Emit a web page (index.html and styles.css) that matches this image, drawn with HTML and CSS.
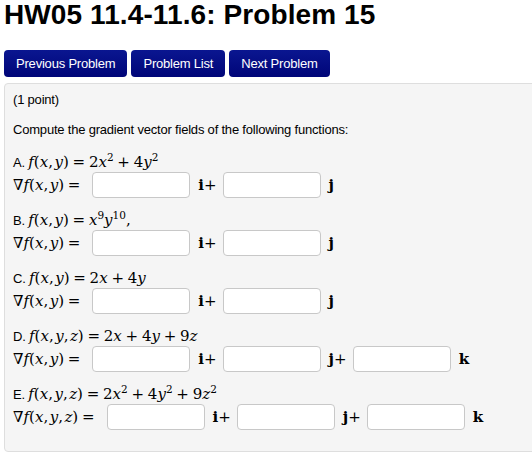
FILE: index.html
```html
<!DOCTYPE html>
<html>
<head>
	<title>HW05 11.4-11.6: Problem 15</title>
	<meta charset="utf-8">
	<link rel="stylesheet" href="styles.css">
</head>
<body>
	<div id="page">
		<h1 class="title">HW05 11.4-11.6: Problem 15</h1>

		<div class="nav">
			<a class="btn" href="#">Previous Problem</a>
			<a class="btn" href="#">Problem List</a>
			<a class="btn" href="#">Next Problem</a>
		</div>

		<div class="problem">
			<p class="points">(1 point)</p>
			<p class="intro">Compute the gradient vector fields of the following functions:</p>

			<!-- A -->
			<div class="part">
				<div class="def">A. <span class="m"><i>f</i>(<i>x</i>,&#8202;<i>y</i>) = 2<i>x</i><sup>2</sup> + 4<i>y</i><sup>2</sup></span></div>
				<div class="row">
					<span class="m lhs">∇<i>f</i>(<i>x</i>,&#8202;<i>y</i>) =</span>
					<input type="text" class="ans">
					<span class="m unit"><b>i</b>+</span>
					<input type="text" class="ans">
					<span class="m unit"><b>j</b></span>
				</div>
			</div>

			<!-- B -->
			<div class="part">
				<div class="def">B. <span class="m"><i>f</i>(<i>x</i>,&#8202;<i>y</i>) = <i>x</i><sup>9</sup><i>y</i><sup>10</sup>,</span></div>
				<div class="row">
					<span class="m lhs">∇<i>f</i>(<i>x</i>,&#8202;<i>y</i>) =</span>
					<input type="text" class="ans">
					<span class="m unit"><b>i</b>+</span>
					<input type="text" class="ans">
					<span class="m unit"><b>j</b></span>
				</div>
			</div>

			<!-- C -->
			<div class="part">
				<div class="def">C. <span class="m"><i>f</i>(<i>x</i>,&#8202;<i>y</i>) = 2<i>x</i> + 4<i>y</i></span></div>
				<div class="row">
					<span class="m lhs">∇<i>f</i>(<i>x</i>,&#8202;<i>y</i>) =</span>
					<input type="text" class="ans">
					<span class="m unit"><b>i</b>+</span>
					<input type="text" class="ans">
					<span class="m unit"><b>j</b></span>
				</div>
			</div>

			<!-- D -->
			<div class="part">
				<div class="def">D. <span class="m"><i>f</i>(<i>x</i>,&#8202;<i>y</i>,&#8202;<i>z</i>) = 2<i>x</i> + 4<i>y</i> + 9<i>z</i></span></div>
				<div class="row">
					<span class="m lhs">∇<i>f</i>(<i>x</i>,&#8202;<i>y</i>) =</span>
					<input type="text" class="ans">
					<span class="m unit"><b>i</b>+</span>
					<input type="text" class="ans">
					<span class="m unit"><b>j</b>+</span>
					<input type="text" class="ans">
					<span class="m unit"><b>k</b></span>
				</div>
			</div>

			<!-- E -->
			<div class="part">
				<div class="def">E. <span class="m"><i>f</i>(<i>x</i>,&#8202;<i>y</i>,&#8202;<i>z</i>) = 2<i>x</i><sup>2</sup> + 4<i>y</i><sup>2</sup> + 9<i>z</i><sup>2</sup></span></div>
				<div class="row">
					<span class="m lhs">∇<i>f</i>(<i>x</i>,&#8202;<i>y</i>,&#8202;<i>z</i>) =</span>
					<input type="text" class="ans">
					<span class="m unit"><b>i</b>+</span>
					<input type="text" class="ans">
					<span class="m unit"><b>j</b>+</span>
					<input type="text" class="ans">
					<span class="m unit"><b>k</b></span>
				</div>
			</div>
		</div>
	</div>
</body>
</html>
```

FILE: styles.css
```css
html{
	overflow: hidden;
}

body{
	margin: 0;
	background-color: #FFF;
	color: #000;
	font-family: "Liberation Sans", Arial, sans-serif;
	font-size: 13px;
	letter-spacing: -0.2px;
}

#page{
	padding: 0 0 0 4px;
}

.title{
	margin: 0;
	font-size: 28px;
	line-height: 30px;
	font-weight: bold;
	letter-spacing: 0.1px;
}

.nav{
	display: flex;
	gap: 4px;
	margin-top: 20px;
}

.btn{
	display: block;
	height: 27px;
	line-height: 27px;
	padding: 0 12px;
	border-radius: 4px;
	background: linear-gradient(#0a1690, #000578);
	color: #FFF;
	text-decoration: none;
}

.problem{
	margin: 6px -10px 0 0;
	padding: 7px 8px 8px 8px;
	background-color: #f5f5f5;
	border: 1px solid #dedede;
	border-radius: 4px;
}

.points, .intro{
	margin: 0;
	line-height: 18px;
}

.intro{
	margin: 12px 0 14px 0;
}

.part{
	margin-bottom: 13px;
}

.def{
	height: 19px;
	line-height: 19px;
	white-space: nowrap;
}

.row{
	display: flex;
	align-items: center;
	height: 26px;
	white-space: nowrap;
}

.m{
	font-family: "DejaVu Serif", "Liberation Serif", serif;
	font-size: 15px;
	letter-spacing: 0;
	word-spacing: -1px;
}

.m sup{
	font-size: 0.7em;
	line-height: 0;
	vertical-align: 0.55em;
}

.lhs{
	margin-right: 12px;
}

.unit{
	margin: 0 6px 0 8px;
}

.ans{
	box-sizing: border-box;
	width: 98px;
	height: 26px;
	margin: 0;
	border: 1px solid #c8c8c8;
	border-radius: 4px;
	background-color: #FFF;
}
```
